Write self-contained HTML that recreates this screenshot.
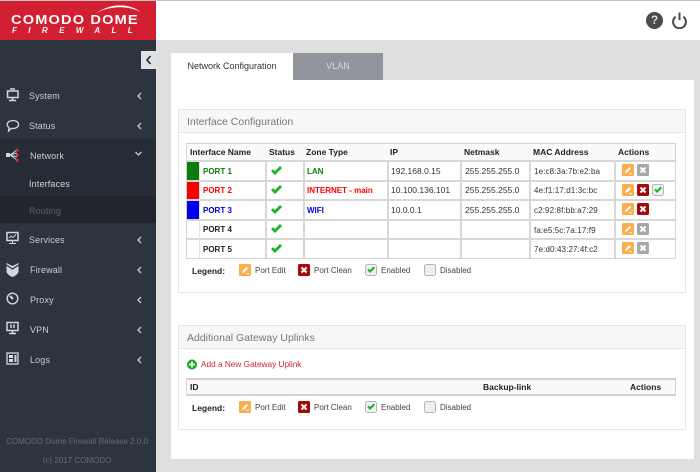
<!DOCTYPE html>
<html><head><meta charset="utf-8">
<style>
*{box-sizing:border-box}
html,body{margin:0;padding:0;width:700px;height:472px;overflow:hidden;background:#dfdfdf;font-family:"Liberation Sans",sans-serif;}
.a{position:absolute}
.nav{position:absolute;left:29px;font-size:9px;color:#c9ccd0;line-height:12px;letter-spacing:.15px}
.ic{position:absolute;left:6px}
.h{position:absolute;left:187px;width:488px;height:2px;background:#d8d8d8}
.v{position:absolute;top:161px;width:2px;height:97px;background:#d8d8d8}
.t{position:absolute;font-size:8.5px;color:#333;line-height:12px;white-space:nowrap}
.b{font-weight:bold;color:#222}
.p{font-size:8px;margin-top:1px}
.sm{font-size:8px;color:#444}
</style></head><body>
<div class="a" style="left:0;top:0;width:700px;height:40px;background:#fff;border-top:1px solid #c4c4c4"></div>
<!-- sidebar -->
<div class="a" style="left:0;top:40px;width:156px;height:432px;background:#2c3440"></div>
<div class="a" style="left:0;top:139px;width:156px;height:84px;background:#262c36"></div>
<div class="a" style="left:0;top:196px;width:156px;height:27px;background:#20252e"></div>
<div class="a" style="left:0;top:1px;width:156px;height:39px;background:#d31f32"></div>
<div class="a" style="left:11px;top:13px;font-size:13px;font-weight:bold;color:#fff;line-height:14px;letter-spacing:1.05px;white-space:nowrap;transform:scaleX(1.12);transform-origin:left">COMODO DOME</div>
<div class="a" style="left:12px;top:26px;font-size:8px;font-weight:bold;font-style:italic;color:#fff;line-height:9px;letter-spacing:11.4px;white-space:nowrap">FIREWALL</div>
<svg class="a" style="left:90px;top:1px" width="60" height="14"><path d="M6 12C20 3 36 1 51 11C36 4 20 5 6 12Z" fill="#fff"/></svg>
<div class="a" style="left:141px;top:51px;width:15px;height:18px;background:#dfe1e4"></div>
<svg class="a" style="left:145px;top:55px" width="8" height="10"><path d="M5.500 1L2 5L5.500 9" fill="none" stroke="#222" stroke-width="1.600"/></svg>

<svg class="ic" style="top:88px" width="14" height="14" fill="none" stroke="#d5d7da" stroke-width="1.500"><rect x="1.500" y="3" width="10.500" height="6.500"/><path d="M4 1H9M6.500 10V12M3 12.500H10"/></svg>
<div class="nav" style="top:90px">System</div>
<svg class="ic" style="top:119px" width="14" height="14" fill="none" stroke="#d5d7da" stroke-width="1.300"><path d="M7 1.500C10.500 1.500 12.500 3.300 12.500 5.500C12.500 8 10 9.500 7 9.500L5 9.500L2.500 12L3 8.500C1.800 7.600 1.200 6.700 1.200 5.500C1.200 3.300 3.500 1.500 7 1.500Z"/></svg>
<div class="nav" style="top:120px">Status</div>
<svg class="ic" style="top:148px" width="14" height="14" fill="none" stroke="#d5d7da"><rect x="0" y="5" width="4" height="4" fill="#d5d7da" stroke="none"/><path d="M4 7L11 2M4 7L11 5M4 7L11 9M4 7L11 12"/><g fill="#d33" stroke="none"><rect x="10" y="1" width="2.500" height="2.500"/><rect x="10" y="6" width="2.500" height="2.500"/><rect x="10" y="11" width="2.500" height="2.500"/></g></svg>
<div class="nav" style="top:150px;left:30px">Network</div>
<div class="nav" style="top:178px;color:#d3d5d8">Interfaces</div>
<div class="nav" style="top:205px;color:#5c626b">Routing</div>
<svg class="ic" style="top:231px" width="14" height="14" fill="none" stroke="#d5d7da" stroke-width="1.500"><rect x="1" y="1.500" width="11" height="8"/><path d="M3 7L5 5L7 6.500L10 3.500M6.500 10V12M3 12.500H10" stroke-width="1"/></svg>
<div class="nav" style="top:234px">Services</div>
<svg class="ic" style="top:262px" width="14" height="15"><path d="M0.500 1L6.500 4L12.500 1V9C12.500 12 9 14 6.500 15C4 14 0.500 12 0.500 9Z" fill="#d5d7da"/><path d="M0.500 3L6.500 7L12.500 3" fill="none" stroke="#2c3440" stroke-width="1.200"/></svg>
<div class="nav" style="top:264px;left:30px">Firewall</div>
<svg class="ic" style="top:292px" width="14" height="14" fill="none" stroke="#d5d7da" stroke-width="1.400"><circle cx="6.500" cy="6.500" r="5.300"/><path d="M4 4L7 7" stroke-width="2"/></svg>
<div class="nav" style="top:294px;left:30px">Proxy</div>
<svg class="ic" style="top:321px" width="14" height="14" fill="none" stroke="#d5d7da" stroke-width="1.500"><rect x="1" y="1.500" width="11" height="8"/><path d="M5 3.500V7M8 3.500V7M6.500 10V12M3 12.500H10"/></svg>
<div class="nav" style="top:324px;left:30px">VPN</div>
<svg class="ic" style="top:352px" width="14" height="14"><rect x="1" y="1" width="11" height="11" fill="none" stroke="#d5d7da" stroke-width="1.300"/><rect x="3" y="3" width="4" height="3" fill="#d5d7da"/><rect x="3" y="7" width="4" height="3" fill="#d5d7da"/><rect x="8.500" y="3" width="2" height="7" fill="#d5d7da"/></svg>
<div class="nav" style="top:354px;left:30px">Logs</div>

<svg class="a" style="left:0;top:0" width="156" height="472" fill="none" stroke="#c9ccd0" stroke-width="1.300">
<path d="M141 93L138 96L141 99M141 123L138 126L141 129M141 237L138 240L141 243M141 267L138 270L141 273M141 297L138 300L141 303M141 327L138 330L141 333M141 357L138 360L141 363M135.500 152L138.500 155L141.500 152"/>
</svg>
<div class="a" style="left:0;top:436px;width:154px;text-align:center;font-size:8px;color:#666c75;line-height:11px;white-space:nowrap">COMODO Dome Firewall Release 2.0.0</div>
<div class="a" style="left:0;top:455px;width:154px;text-align:center;font-size:8px;color:#666c75;line-height:11px">(c) 2017 COMODO</div>

<!-- topbar icons -->
<div class="a" style="left:646px;top:12px;width:17px;height:17px;border-radius:50%;background:#4a4a4a;color:#ddd;font-weight:bold;font-size:12px;line-height:17px;text-align:center">?</div>
<svg class="a" style="left:671px;top:12px" width="17" height="17" fill="none" stroke="#4a4a4a" stroke-width="2"><path d="M4.700 4.700A6.400 6.400 0 1 0 12.300 4.700"/><path d="M8.500 0.500V8"/></svg>

<!-- panel -->
<div class="a" style="left:171px;top:80px;width:523px;height:379px;background:#fff"></div>
<div class="a" style="left:171px;top:53px;width:122px;height:27px;background:#fff;font-size:9px;color:#333;line-height:26px;text-align:center">Network Configuration</div>
<div class="a" style="left:293px;top:53px;width:90px;height:27px;background:#92959c;font-size:9px;color:#d8d9dc;line-height:26px;text-align:center">VLAN</div>

<!-- box 1 -->
<div class="a" style="left:178px;top:109px;width:508px;height:184px;border:1px solid #e6e6e6"></div>
<div class="a" style="left:179px;top:110px;width:506px;height:23px;background:#f8f7f7;border-bottom:1px solid #e6e6e6;font-size:10.500px;color:#777;line-height:24px;padding-left:8px">Interface Configuration</div>
<!-- box 2 -->
<div class="a" style="left:178px;top:325px;width:508px;height:105px;border:1px solid #e6e6e6"></div>
<div class="a" style="left:179px;top:326px;width:506px;height:23px;background:#f8f7f7;border-bottom:1px solid #e6e6e6;font-size:10.500px;color:#777;line-height:24px;padding-left:8px">Additional Gateway Uplinks</div>

<!-- table -->
<div class="a" style="left:186px;top:143px;width:490px;height:116px;border:1px solid #d2d2d2"></div>
<div class="a" style="left:187px;top:144px;width:488px;height:16px;background:#fbfafa"></div>
<div class="a" style="left:187px;top:161px;width:12px;height:19px;background:#0a7d0a"></div>
<div class="a" style="left:187px;top:180px;width:12px;height:19px;background:#fb0000"></div>
<div class="a" style="left:187px;top:200px;width:12px;height:19px;background:#0000f0"></div>
<div class="h" style="top:160px"></div>
<div class="h" style="top:180px"></div>
<div class="h" style="top:199px"></div>
<div class="h" style="top:219px"></div>
<div class="h" style="top:238px"></div>
<div class="v" style="left:199px;width:1px;background:#e4e4e4"></div>
<div class="v" style="left:265px"></div>
<div class="v" style="left:303px"></div>
<div class="v" style="left:387px"></div>
<div class="v" style="left:460px"></div>
<div class="v" style="left:529px"></div>
<div class="v" style="left:614px"></div>

<div class="t b" style="left:190px;top:146px">Interface Name</div>
<div class="t b" style="left:269px;top:146px">Status</div>
<div class="t b" style="left:306px;top:146px">Zone Type</div>
<div class="t b" style="left:390px;top:146px">IP</div>
<div class="t b" style="left:464px;top:146px">Netmask</div>
<div class="t b" style="left:533px;top:146px">MAC Address</div>
<div class="t b" style="left:618px;top:146px">Actions</div>

<div class="t b p" style="left:203px;top:165px;color:#0a7d0a">PORT 1</div>
<div class="t b p" style="left:203px;top:184px;color:#f00">PORT 2</div>
<div class="t b p" style="left:203px;top:204px;color:#00d">PORT 3</div>
<div class="t b p" style="left:203px;top:223px">PORT 4</div>
<div class="t b p" style="left:203px;top:243px">PORT 5</div>
<div class="t b p" style="left:307px;top:165px;color:#0a7d0a">LAN</div>
<div class="t b p" style="left:307px;top:184px;color:#f00">INTERNET - main</div>
<div class="t b p" style="left:307px;top:204px;color:#00d">WIFI</div>
<div class="t" style="left:391px;top:165px">192.168.0.15</div>
<div class="t" style="left:391px;top:184px">10.100.136.101</div>
<div class="t" style="left:391px;top:204px">10.0.0.1</div>
<div class="t" style="left:465px;top:165px">255.255.255.0</div>
<div class="t" style="left:465px;top:184px">255.255.255.0</div>
<div class="t" style="left:465px;top:204px">255.255.255.0</div>
<div class="t p" style="left:534px;top:165px;letter-spacing:.12px">1e:c8:3a:7b:e2:ba</div>
<div class="t p" style="left:534px;top:184px;letter-spacing:.12px">4e:f1:17:d1:3c:bc</div>
<div class="t p" style="left:534px;top:204px;letter-spacing:.12px">c2:92:8f:bb:a7:29</div>
<div class="t p" style="left:534px;top:224px;letter-spacing:.12px">fa:e5:5c:7a:17:f9</div>
<div class="t p" style="left:534px;top:243px;letter-spacing:.12px">7e:d0:43:27:4f:c2</div>

<svg class="a" style="left:0;top:0" width="700" height="472">
<defs>
<g id="ck"><path d="M0 5L2 3.200L4 5L9 0L11 2L4 9Z" fill="#1eb026"/></g>
<g id="ed"><rect width="12" height="12" rx="1.500" fill="#fbae4b"/><path d="M3 9L3.500 7L7.500 3L9 4.500L5 8.500Z" fill="#fff"/><path d="M7 9.700H10" stroke="#fff" stroke-width=".8"/></g>
<g id="xg"><rect width="12" height="12" rx="1.500" fill="#a7a7a7"/><path d="M3.500 3.500L8.500 8.500M8.500 3.500L3.500 8.500" stroke="#fff" stroke-width="2"/></g>
<g id="xr"><rect width="12" height="12" rx="1.500" fill="#a50a0a"/><path d="M3.500 3.500L8.500 8.500M8.500 3.500L3.500 8.500" stroke="#fff" stroke-width="2"/></g>
<g id="en"><rect x=".5" y=".5" width="11" height="11" rx="2" fill="#f1f1f1" stroke="#b5b5b5"/><path d="M2.200 6L3.600 4.700L5 6L8.600 2.500L10 4L5 9Z" fill="#1eb026"/></g>
<g id="di"><rect x=".5" y=".5" width="11" height="11" rx="2" fill="#efefef" stroke="#b5b5b5"/></g>
</defs>
<use href="#ck" x="271" y="166"/><use href="#ck" x="271" y="185"/><use href="#ck" x="271" y="205"/><use href="#ck" x="271" y="224"/><use href="#ck" x="271" y="244"/>
<use href="#ed" x="622" y="164"/><use href="#xg" x="637" y="164"/>
<use href="#ed" x="622" y="184"/><use href="#xr" x="637" y="184"/><use href="#en" x="652" y="184"/>
<use href="#ed" x="622" y="203"/><use href="#xr" x="637" y="203"/>
<use href="#ed" x="622" y="223"/><use href="#xg" x="637" y="223"/>
<use href="#ed" x="622" y="242"/><use href="#xg" x="637" y="242"/>
<use href="#ed" x="239" y="264"/><use href="#xr" x="298" y="264"/><use href="#en" x="365" y="264"/><use href="#di" x="424" y="264"/>
<use href="#ed" x="239" y="401"/><use href="#xr" x="298" y="401"/><use href="#en" x="365" y="401"/><use href="#di" x="424" y="401"/>
<circle cx="192" cy="364.500" r="5" fill="#12b01e"/><path d="M189 364.500H195M192 361.500V367.500" stroke="#fff" stroke-width="1.800"/>
</svg>

<div class="t b" style="left:192px;top:265px">Legend:</div>
<div class="t sm" style="left:255px;top:265px">Port Edit</div>
<div class="t sm" style="left:314px;top:265px">Port Clean</div>
<div class="t sm" style="left:381px;top:265px">Enabled</div>
<div class="t sm" style="left:440px;top:265px">Disabled</div>

<div class="t" style="left:201px;top:359px;color:#d31f32;font-size:8.250px">Add a New Gateway Uplink</div>
<div class="a" style="left:186px;top:378px;width:490px;height:18px;border:1px solid #d2d2d2;border-width:2px 1px;background:#fbfafa"></div>
<div class="t b" style="left:190px;top:381px">ID</div>
<div class="t b" style="left:483px;top:381px">Backup-link</div>
<div class="t b" style="left:630px;top:381px">Actions</div>

<div class="t b" style="left:192px;top:402px">Legend:</div>
<div class="t sm" style="left:255px;top:402px">Port Edit</div>
<div class="t sm" style="left:314px;top:402px">Port Clean</div>
<div class="t sm" style="left:381px;top:402px">Enabled</div>
<div class="t sm" style="left:440px;top:402px">Disabled</div>
</body></html>
